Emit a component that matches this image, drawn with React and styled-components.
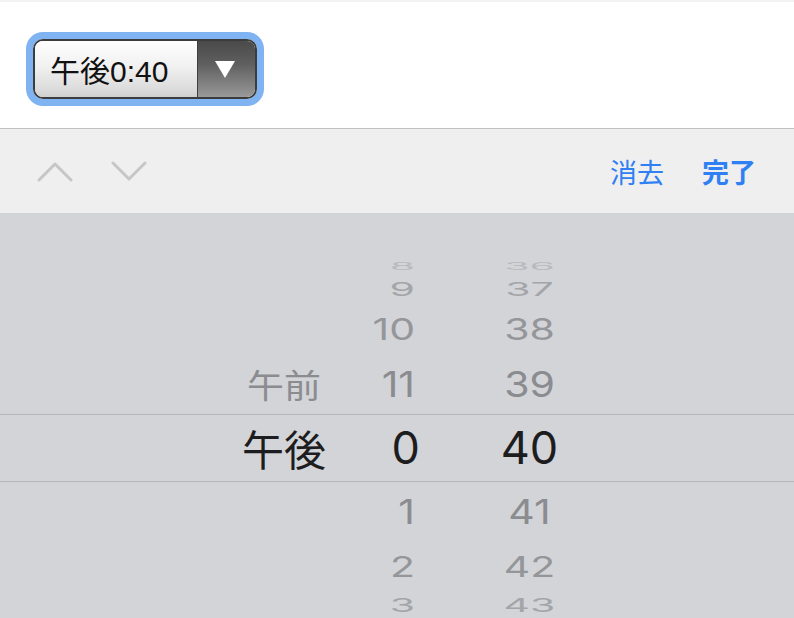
import React from "react";
import styled, { createGlobalStyle } from "styled-components";

const GlobalStyle = createGlobalStyle`
  html, body {
    margin: 0;
    padding: 0;
    background: #ffffff;
  }
  body {
    font-family: "Liberation Sans", "Noto Sans CJK JP", sans-serif;
  }
`;

// row heights follow the drum: rows shrink towards the top and bottom edges
const ROWS = [
  { k: -4, h: 17, scale: 0.24, color: "#b9babe" },
  { k: -3, h: 29, scale: 0.47, color: "#a4a5a9" },
  { k: -2, h: 50, scale: 0.72, color: "#95969a" },
  { k: -1, h: 60, scale: 0.88, color: "#8b8c90" },
  { k: 0, h: 67, scale: 1, color: "#1d1d1f" },
  { k: 1, h: 60, scale: 0.84, color: "#8b8c90" },
  { k: 2, h: 50, scale: 0.7, color: "#95969a" },
  { k: 3, h: 29, scale: 0.46, color: "#a4a5a9" },
];

const ampm = { "-1": "午前", 0: "午後" };
const hours = ["8", "9", "10", "11", "0", "1", "2", "3"];
const minutes = ["36", "37", "38", "39", "40", "41", "42", "43"];

export default function App() {
  return (
    <Page>
      <GlobalStyle />
      <TopArea>
        <Select>
          <SelectLabel>午後0:40</SelectLabel>
          <SelectButton>
            <Triangle />
          </SelectButton>
        </Select>
      </TopArea>

      <Toolbar>
        <Arrows>
          <Chevron viewBox="0 0 36 21">
            <polyline points="2,19 18,3 34,19" />
          </Chevron>
          <Chevron viewBox="0 0 36 21">
            <polyline points="2,2 18,18 34,2" />
          </Chevron>
        </Arrows>
        <Actions>
          <ToolButton>消去</ToolButton>
          <ToolButton $bold>完了</ToolButton>
        </Actions>
      </Toolbar>

      <Picker>
        <Band />
        <Wheel $width={120} $align="center">
          {ROWS.map((r) => (
            <Row key={r.k} $h={r.h}>
              <Cell
                $center={r.k === 0}
                $cjk
                $scale={r.scale}
                $color={r.color}
              >
                {ampm[r.k] || ""}
              </Cell>
            </Row>
          ))}
        </Wheel>
        <Wheel $width={71} $align="flex-end">
          {ROWS.map((r, i) => (
            <Row key={r.k} $h={r.h}>
              <Cell
                $center={r.k === 0}
                $shift={r.k === 0 ? -5 : 0}
                $scale={r.scale}
                $color={r.color}
              >
                {hours[i]}
              </Cell>
            </Row>
          ))}
        </Wheel>
        <Wheel $width={229} $align="center">
          {ROWS.map((r, i) => (
            <Row key={r.k} $h={r.h}>
              <Cell $center={r.k === 0} $scale={r.scale} $color={r.color}>
                {minutes[i]}
              </Cell>
            </Row>
          ))}
        </Wheel>
      </Picker>
    </Page>
  );
}

const Page = styled.div`
  width: 794px;
  height: 618px;
  display: flex;
  flex-direction: column;
  overflow: hidden;
  border-top: 2px solid #f2f2f3;
  box-sizing: border-box;
`;

const TopArea = styled.div`
  height: 126px;
  padding: 37px 0 0 33px;
  box-sizing: border-box;
`;

const Select = styled.div`
  width: 224px;
  height: 60px;
  box-sizing: border-box;
  display: flex;
  border: 2px solid #3c3c3c;
  border-radius: 10px;
  overflow: hidden;
  box-shadow: 0 0 0 7px #80b3f1;
`;

const SelectLabel = styled.div`
  flex: 1;
  display: flex;
  align-items: center;
  padding: 0 0 1px 15px;
  font-family: "Liberation Sans", "Noto Sans CJK JP", sans-serif;
  font-size: 30px;
  color: #111;
  background: linear-gradient(#fefefe 0%, #f1f1f1 45%, #dcdcdc 85%, #cfcfcf 100%);
`;

const SelectButton = styled.div`
  width: 57px;
  display: flex;
  align-items: center;
  justify-content: center;
  border-left: 1px solid #3e3e3e;
  background: linear-gradient(#4a4a4a 0%, #5e5e5e 40%, #8a8a8a 85%, #9a9a9a 100%);
`;

const Triangle = styled.div`
  width: 0;
  height: 0;
  margin-right: 4px;
  border-left: 10px solid transparent;
  border-right: 10px solid transparent;
  border-top: 17px solid #ffffff;
`;

const Toolbar = styled.div`
  height: 85px;
  box-sizing: border-box;
  border-top: 1px solid #c0c0c4;
  background: #efefef;
  display: flex;
  align-items: center;
  justify-content: space-between;
  padding: 0 38px 0 37px;
`;

const Arrows = styled.div`
  display: flex;
  gap: 38px;
  align-items: center;
`;

const Chevron = styled.svg`
  width: 36px;
  height: 21px;
  fill: none;
  stroke: #c6c6c8;
  stroke-width: 3;
  stroke-linecap: round;
  stroke-linejoin: round;
`;

const Actions = styled.div`
  display: flex;
  gap: 38px;
  align-items: center;
`;

const ToolButton = styled.span`
  font-family: "Noto Sans CJK JP", sans-serif;
  font-size: 27px;
  font-weight: ${(p) => (p.$bold ? 700 : 400)};
  color: #2f80f2;
`;

const Picker = styled.div`
  flex: 1;
  position: relative;
  display: flex;
  padding-left: 224px;
  background: #d2d4d8;
  overflow: hidden;
`;

const Band = styled.div`
  position: absolute;
  left: 0;
  right: 0;
  top: 201px;
  height: 66px;
  border-top: 1px solid #b5b6bb;
  border-bottom: 1px solid #b5b6bb;
  pointer-events: none;
`;

const Wheel = styled.div`
  width: ${(p) => p.$width}px;
  flex: none;
  display: flex;
  flex-direction: column;
  align-items: ${(p) => p.$align};
  padding-top: 45px;
`;

const Row = styled.div`
  height: ${(p) => p.$h}px;
  flex: none;
  display: flex;
  align-items: center;
`;

const Cell = styled.span`
  display: block;
  margin-right: ${(p) => p.$shift || 0}px;
  font-family: ${(p) =>
    p.$cjk ? `"Noto Sans CJK JP", sans-serif` : `"Inter", "Liberation Sans", sans-serif`};
  font-size: ${(p) => (p.$cjk ? (p.$center ? 42 : 37) : p.$center ? 45 : 41)}px;
  line-height: 1;
  color: ${(p) => p.$color};
  transform: scaleY(${(p) => p.$scale});
  white-space: nowrap;
`;
